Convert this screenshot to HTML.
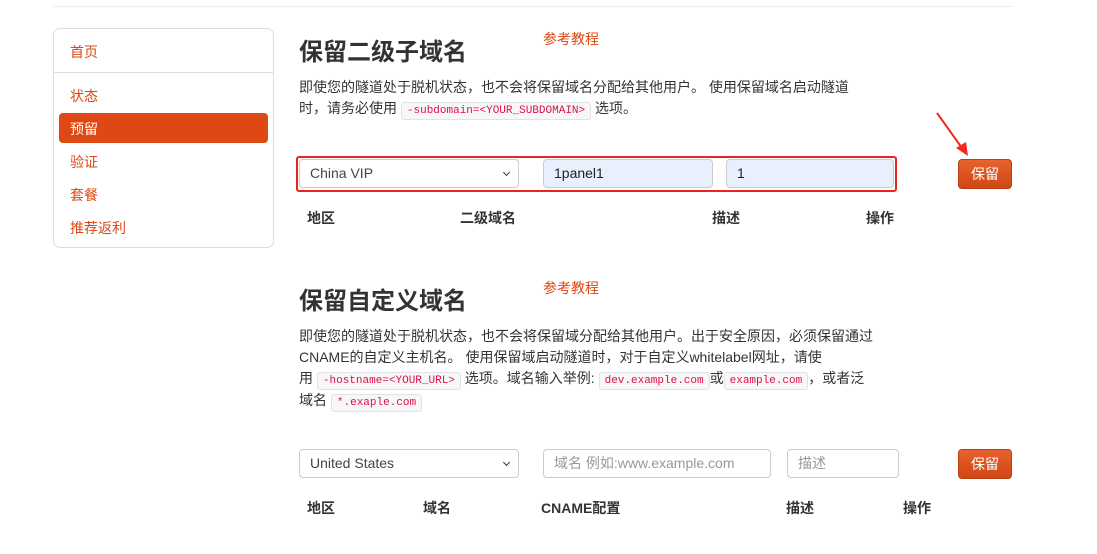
<!DOCTYPE html>
<html><head><meta charset="utf-8"><style>
*{box-sizing:border-box;margin:0;padding:0}
body{width:1097px;height:554px;background:#fff;font-family:"Liberation Sans","Noto Sans CJK SC",sans-serif;color:#333;position:relative;overflow:hidden;font-size:14px}
.a{position:absolute;white-space:nowrap}
.side{position:absolute;left:53px;top:28px;width:221px;height:220px;border:1px solid #ddd;border-radius:7px}
.nav{color:#dd4814;font-size:14px}
.h{font-size:24px;font-weight:bold;color:#333}
.lnk{color:#dd4814;font-size:14px}
.p{font-size:14px;line-height:21px;color:#333}
code{font-family:"Liberation Mono",monospace;font-size:11px;line-height:14px;color:#dd1144;background:#f7f7f9;border:1px solid #e1e1e8;border-radius:3px;padding:1px 5px;display:inline-block;vertical-align:0px}
.sel,.inp{position:absolute;height:29px;border:1px solid #ccc;border-radius:4px;background:#fff;font-size:14px;padding-left:10px;line-height:27px;color:#444}
.inp.f{background:#e8f0fe;color:#222}
.ph{color:#999}
.btn{position:absolute;width:54px;height:30px;border-radius:4px;background:linear-gradient(#e8632f,#cf4712);border:1px solid #bb3f10;color:#fff;font-size:14px;text-align:center;line-height:28px}
.th{font-weight:bold;font-size:14px}
.chev{position:absolute;right:9px;top:10px;width:5px;height:5px;border-right:1.5px solid #333;border-bottom:1.5px solid #333;transform:rotate(45deg)}
</style></head><body>
<div class="a" style="left:53px;top:6px;width:960px;height:1px;background:#eee"></div>
<div class="side"></div>
<div class="a" style="left:54px;top:72px;width:219px;height:1px;background:#ddd"></div>
<div class="a" style="left:59px;top:113px;width:209px;height:30px;background:#dd4814;border-radius:4px"></div>
<div class="a nav" style="left:70px;top:42px">首页</div>
<div class="a nav" style="left:70px;top:86px">状态</div>
<div class="a nav" style="left:70px;top:119px;color:#fff">预留</div>
<div class="a nav" style="left:70px;top:152px">验证</div>
<div class="a nav" style="left:70px;top:185px">套餐</div>
<div class="a nav" style="left:70px;top:218px">推荐返利</div>

<div class="a h" style="left:299px;top:32px">保留二级子域名</div>
<div class="a lnk" style="left:543px;top:29px">参考教程</div>
<div class="a p" style="left:299px;top:77px">即使您的隧道处于脱机状态，也不会将保留域名分配给其他用户。 使用保留域名启动隧道<br>时，请务必使用 <code>-subdomain=&lt;YOUR_SUBDOMAIN&gt;</code> 选项。</div>

<div class="a" style="left:296px;top:156px;width:601px;height:36px;border:2px solid #e8261f;border-radius:3px"></div>
<div class="sel" style="left:299px;top:159px;width:220px">China VIP<span class="chev"></span></div>
<div class="inp f" style="left:543px;top:159px;width:170px">1panel1</div>
<div class="inp f" style="left:726px;top:159px;width:168px">1</div>
<div class="btn" style="left:958px;top:159px">保留</div>
<svg class="a" style="left:930px;top:108px" width="45" height="55"><line x1="7" y1="5" x2="32" y2="40" stroke="#ee2a22" stroke-width="2"/><polygon points="38,48 26,40 36,34" fill="#ee2a22"/></svg>
<div class="a th" style="left:307px;top:208px">地区</div>
<div class="a th" style="left:460px;top:208px">二级域名</div>
<div class="a th" style="left:712px;top:208px">描述</div>
<div class="a th" style="left:866px;top:208px">操作</div>

<div class="a h" style="left:299px;top:281px">保留自定义域名</div>
<div class="a lnk" style="left:543px;top:278px">参考教程</div>
<div class="a p" style="left:299px;top:326px">即使您的隧道处于脱机状态，也不会将保留域分配给其他用户。出于安全原因，必须保留通过<br>CNAME的自定义主机名。 使用保留域启动隧道时，对于自定义whitelabel网址，请使<br>用 <code>-hostname=&lt;YOUR_URL&gt;</code> 选项。域名输入举例: <code>dev.example.com</code>或<code>example.com</code>，或者泛<br>域名 <code>*.exaple.com</code></div>

<div class="sel" style="left:299px;top:449px;width:220px">United States<span class="chev"></span></div>
<div class="inp ph" style="left:543px;top:449px;width:228px">域名 例如:www.example.com</div>
<div class="inp ph" style="left:787px;top:449px;width:112px">描述</div>
<div class="btn" style="left:958px;top:449px">保留</div>
<div class="a th" style="left:307px;top:498px">地区</div>
<div class="a th" style="left:423px;top:498px">域名</div>
<div class="a th" style="left:541px;top:498px">CNAME配置</div>
<div class="a th" style="left:786px;top:498px">描述</div>
<div class="a th" style="left:903px;top:498px">操作</div>
</body></html>
